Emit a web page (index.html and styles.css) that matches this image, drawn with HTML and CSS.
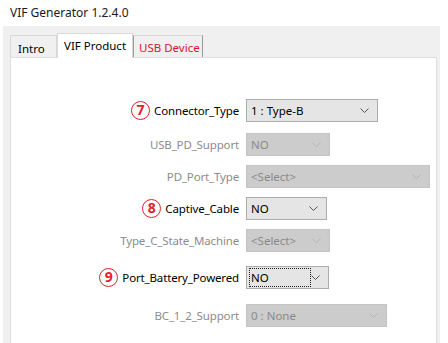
FILE: index.html
```html
<!DOCTYPE html>
<html>
<head>
<title>VIF Generator 1.2.4.0</title>
<link rel="stylesheet" href="styles.css">
</head>
<body>
<div class="titlebar">VIF Generator 1.2.4.0</div>

<div class="window">
    <!-- tab strip -->
    <div class="tabs">
        <div class="tab tab-intro">Intro</div>
        <div class="tab tab-active">VIF Product</div>
        <div class="tab tab-usb">USB Device</div>
    </div>

    <!-- VIF Product page -->
    <div class="panel">
        <div class="form">
            <div class="row row-1">
                <div class="label"><span class="badge">7</span>Connector_Type</div>
                <div class="combo w-132"><span>1 : Type-B</span>
                    <svg class="chev" width="9" height="5" viewBox="0 0 9 5"><path d="M0.5 0.5 L4.5 4.5 L8.5 0.5" fill="none" stroke="#555" stroke-width="1"/></svg>
                </div>
            </div>
            <div class="row row-2">
                <div class="label off">USB_PD_Support</div>
                <div class="combo combo-off w-84"><span>NO</span>
                    <svg class="chev" width="9" height="5" viewBox="0 0 9 5"><path d="M0.5 0.5 L4.5 4.5 L8.5 0.5" fill="none" stroke="#b4b4b4" stroke-width="1"/></svg>
                </div>
            </div>
            <div class="row row-3">
                <div class="label off">PD_Port_Type</div>
                <div class="combo combo-off w-184"><span>&lt;Select&gt;</span>
                    <svg class="chev" width="9" height="5" viewBox="0 0 9 5"><path d="M0.5 0.5 L4.5 4.5 L8.5 0.5" fill="none" stroke="#b4b4b4" stroke-width="1"/></svg>
                </div>
            </div>
            <div class="row row-4">
                <div class="label"><span class="badge">8</span>Captive_Cable</div>
                <div class="combo w-81"><span>NO</span>
                    <svg class="chev" width="9" height="5" viewBox="0 0 9 5"><path d="M0.5 0.5 L4.5 4.5 L8.5 0.5" fill="none" stroke="#555" stroke-width="1"/></svg>
                </div>
            </div>
            <div class="row row-5">
                <div class="label off">Type_C_State_Machine</div>
                <div class="combo combo-off w-84"><span>&lt;Select&gt;</span>
                    <svg class="chev" width="9" height="5" viewBox="0 0 9 5"><path d="M0.5 0.5 L4.5 4.5 L8.5 0.5" fill="none" stroke="#b4b4b4" stroke-width="1"/></svg>
                </div>
            </div>
            <div class="row row-6">
                <div class="label"><span class="badge">9</span>Port_Battery_Powered</div>
                <div class="combo combo-focus w-83"><span class="focus">NO</span>
                    <svg class="chev" width="9" height="5" viewBox="0 0 9 5"><path d="M0.5 0.5 L4.5 4.5 L8.5 0.5" fill="none" stroke="#555" stroke-width="1"/></svg>
                </div>
            </div>
            <div class="row row-7">
                <div class="label off">BC_1_2_Support</div>
                <div class="combo combo-off w-141"><span>0 : None</span>
                    <svg class="chev" width="9" height="5" viewBox="0 0 9 5"><path d="M0.5 0.5 L4.5 4.5 L8.5 0.5" fill="none" stroke="#b4b4b4" stroke-width="1"/></svg>
                </div>
            </div>
        </div>
    </div>
</div>
</body>
</html>
```

FILE: styles.css
```css
body {
    margin: 0;
    background-color: white;
    font-family: "Noto Sans", "Open Sans", sans-serif;
    font-size: 11.5px;
    color: black;
    overflow: hidden;
}
.titlebar {
    height: 26px;
    line-height: 25px;
    padding-left: 10px;
    font-size: 12px;
    color: #1a1a1a;
}
.window {
    margin-left: 3px;
    width: 427px;
    height: 317px;
    padding: 0 3px 0 7px;
    background-color: #f0f0f0;
}
.tabs {
    display: flex;
    align-items: flex-end;
    height: 31px;
}
.tab {
    box-sizing: border-box;
    height: 22px;
    line-height: 20px;
    border: 1px solid #d9d9d9;
    border-bottom: none;
    background-color: #f0f0f0;
    white-space: nowrap;
}
.tab-intro {
    width: 47px;
    padding-left: 7px;
    margin-top: 2px;
    line-height: 25px;
}
.tab-active {
    position: relative;
    top: 1px;
    width: 76px;
    height: 25px;
    padding-left: 6px;
    line-height: 23px;
    background-color: white;
    border-color: #d9d9d9;
}
.tab-usb {
    width: 70px;
    padding-left: 5px;
    line-height: 24px;
    color: #e0132b;
    border-left-color: #9a9a9a;
    border-right-color: #9a9a9a;
}
.panel {
    height: 290px;
    background-color: white;
    border: 1px solid #dedede;
    border-bottom: none;
}
.form {
    padding-top: 41px;
}
.row {
    display: flex;
    align-items: center;
    height: 23px;
}
.row-2 { margin-top: 11px; }
.row-3 { margin-top: 9px; }
.row-4 { margin-top: 9px; }
.row-5 { margin-top: 9px; }
.row-6 { margin-top: 14px; }
.row-7 { margin-top: 15px; }
.label {
    display: flex;
    align-items: center;
    justify-content: flex-end;
    width: 228px;
    margin-right: 7px;
    white-space: nowrap;
    letter-spacing: -0.15px;
}
.label.off {
    color: #8c8c8c;
}
.badge {
    box-sizing: border-box;
    width: 19px;
    height: 19px;
    margin-right: 4px;
    border: 1.5px solid #e3202c;
    border-radius: 50%;
    color: #e3202c;
    font-weight: bold;
    font-size: 14px;
    line-height: 16px;
    text-align: center;
    letter-spacing: 0;
}
.combo {
    box-sizing: border-box;
    display: flex;
    align-items: center;
    justify-content: space-between;
    height: 23px;
    padding: 0 8px 0 4px;
    background-color: #e5e5e5;
    border: 1px solid #acacac;
}
.combo-off {
    background-color: #cccccc;
    border-color: #c4c4c4;
    color: #8a8a8a;
}
.combo-focus {
    padding-left: 2px;
}
.focus {
    box-sizing: border-box;
    width: 62px;
    height: 19px;
    line-height: 17px;
    padding-left: 1px;
    border: 1px dotted #222;
}
.chev {
    flex-shrink: 0;
}
.w-132 { width: 132px; }
.w-84 { width: 84px; }
.w-184 { width: 184px; }
.w-81 { width: 81px; }
.w-83 { width: 83px; }
.w-141 { width: 141px; }
```
